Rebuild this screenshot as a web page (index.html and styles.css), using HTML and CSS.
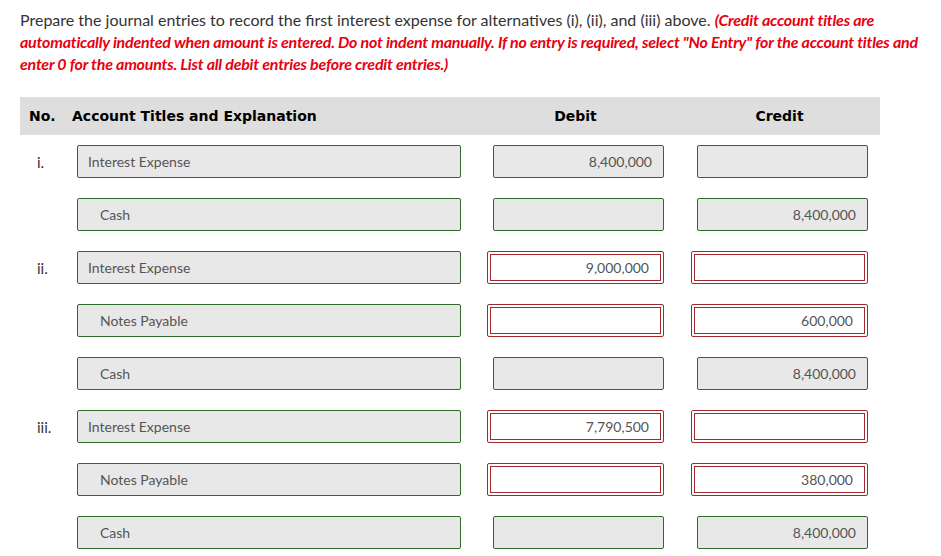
FILE: index.html
```html
<!DOCTYPE html>
<html>
<head>
<meta charset="utf-8">
<link rel="stylesheet" href="styles.css">
</head>
<body>
<p class="intro">Prepare the journal entries to record the first interest expense for alternatives (i), (ii), and (iii) above. <em class="warn">(Credit account titles are automatically indented when amount is entered. Do not indent manually. If no entry is required, select "No Entry" for the account titles and enter 0 for the amounts. List all debit entries before credit entries.)</em></p>

<div class="sheet">
  <div class="head">
    <div class="h-no">No.</div>
    <div class="h-acct">Account Titles and Explanation</div>
    <div></div>
    <div class="h-amt">Debit</div>
    <div></div>
    <div class="h-amt">Credit</div>
  </div>

  <div class="rows">
    <div class="row">
      <div class="num">i.</div>
      <div class="box acct">Interest Expense</div>
      <div></div>
      <div class="box amt">8,400,000</div>
      <div></div>
      <div class="box amt"></div>
    </div>
    <div class="row">
      <div class="num"></div>
      <div class="box acct indent">Cash</div>
      <div></div>
      <div class="box amt"></div>
      <div></div>
      <div class="box amt">8,400,000</div>
    </div>
    <div class="row">
      <div class="num">ii.</div>
      <div class="box acct">Interest Expense</div>
      <div></div>
      <div class="err"><div class="err-in">9,000,000</div></div>
      <div></div>
      <div class="err"><div class="err-in"></div></div>
    </div>
    <div class="row">
      <div class="num"></div>
      <div class="box acct indent">Notes Payable</div>
      <div></div>
      <div class="err"><div class="err-in"></div></div>
      <div></div>
      <div class="err"><div class="err-in">600,000</div></div>
    </div>
    <div class="row">
      <div class="num"></div>
      <div class="box acct indent">Cash</div>
      <div></div>
      <div class="box amt"></div>
      <div></div>
      <div class="box amt">8,400,000</div>
    </div>
    <div class="row">
      <div class="num">iii.</div>
      <div class="box acct">Interest Expense</div>
      <div></div>
      <div class="err"><div class="err-in">7,790,500</div></div>
      <div></div>
      <div class="err"><div class="err-in"></div></div>
    </div>
    <div class="row">
      <div class="num"></div>
      <div class="box acct indent">Notes Payable</div>
      <div></div>
      <div class="err"><div class="err-in"></div></div>
      <div></div>
      <div class="err"><div class="err-in">380,000</div></div>
    </div>
    <div class="row">
      <div class="num"></div>
      <div class="box acct indent">Cash</div>
      <div></div>
      <div class="box amt"></div>
      <div></div>
      <div class="box amt">8,400,000</div>
    </div>
  </div>
</div>
</body>
</html>
```

FILE: styles.css
```css
html, body {
  margin: 0;
  padding: 0;
  background: #fff;
}
body {
  font-family: Lato, "Open Sans", sans-serif;
  color: #333;
}
.intro {
  margin: 9px 20px 0 20px;
  font-size: 16px;
  line-height: 22px;
  color: #333;
}
.warn {
  font-style: italic;
  font-weight: bold;
  color: #e8000f;
  letter-spacing: -0.22px;
}
.sheet {
  width: 860px;
  margin: 22px 0 0 20px;
}
.head {
  display: grid;
  grid-template-columns: 57px 384px 32px 171px 33px 171px;
  height: 38px;
  align-items: center;
  background: #dedede;
  font-family: "DejaVu Sans", Verdana, sans-serif;
  font-weight: bold;
  font-size: 14px;
  color: #000;
}
.h-no {
  padding-left: 9px;
}
.h-acct {
  margin-left: -5px;
  white-space: nowrap;
}
.h-amt {
  text-align: center;
  margin-left: -6px;
}
.rows {
  display: flex;
  flex-direction: column;
  gap: 20px;
  margin-top: 10px;
}
.row {
  display: grid;
  grid-template-columns: 57px 384px 32px 171px 33px 171px;
  height: 33px;
  align-items: center;
}
.num {
  padding-left: 17px;
  font-size: 15px;
  color: #333;
}
.box {
  box-sizing: border-box;
  height: 33px;
  border: 1px solid #2f6a2a;
  border-radius: 2px;
  background: #e8e8e8;
  font-size: 14px;
  color: #555;
  line-height: 32px;
  white-space: nowrap;
}
.acct {
  padding-left: 10px;
}
.acct.indent {
  padding-left: 22px;
}
.amt {
  text-align: right;
  padding-right: 11px;
}
.err {
  box-sizing: border-box;
  width: 177px;
  height: 33px;
  margin-left: -6px;
  border: 1px solid #a3282c;
  border-radius: 2px;
  padding: 2px;
  background: #fff;
}
.err-in {
  box-sizing: border-box;
  height: 27px;
  border: 1px solid #a3282c;
  background: #fff;
  font-size: 14px;
  color: #555;
  line-height: 26px;
  text-align: right;
  padding-right: 11px;
}
```
